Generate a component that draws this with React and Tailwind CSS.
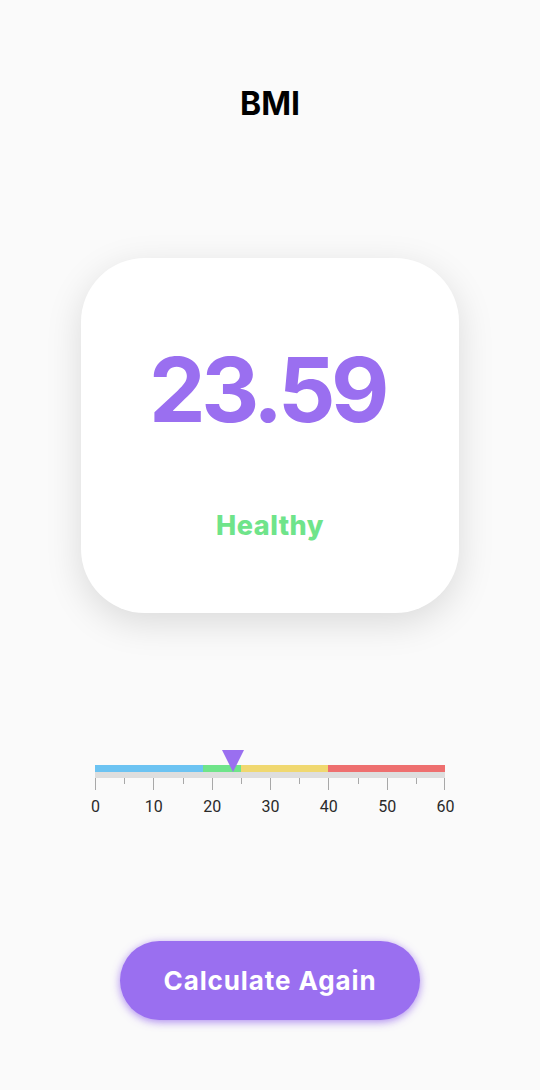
import React from "react";

const SEGMENTS = [
  { from: 0, to: 18.5, color: "bg-[#6cc3f2]" },
  { from: 18.5, to: 25, color: "bg-[#6fe48a]" },
  { from: 25, to: 40, color: "bg-[#f0d870]" },
  { from: 40, to: 60, color: "bg-[#ee6f6f]" },
];

function Scale({ value }) {
  const W = 350;
  const px = (v) => (v / 60) * W;
  const ticks = [];
  for (let i = 0; i <= 12; i++) ticks.push(i * 5);
  return (
    <div className="relative w-[350px] pt-[15px]">
      <div
        className="absolute top-0 w-0 h-0 border-l-[11px] border-r-[11px] border-t-[22px] border-l-transparent border-r-transparent border-t-[#9a6ff0]"
        style={{ left: px(value) - 11 }}
      />
      <div className="flex h-[7px] w-full">
        {SEGMENTS.map((s) => (
          <div key={s.from} className={s.color} style={{ width: px(s.to - s.from) }} />
        ))}
      </div>
      <div className="h-[6px] w-full bg-[#dedede]" />
      <div className="relative h-[12px] w-full">
        {ticks.map((t) => (
          <div
            key={t}
            className={`absolute top-0 w-px bg-[#a8a8a8] ${t % 10 === 0 ? "h-[12px]" : "h-[6px]"}`}
            style={{ left: px(t) - (t === 60 ? 1 : 0) }}
          />
        ))}
      </div>
      <div className="relative h-[24px] mt-[7px] w-full font-['Roboto',sans-serif] text-[16px] leading-[19px] text-[#2a2a2a]">
        {[0, 10, 20, 30, 40, 50, 60].map((t) => (
          <span
            key={t}
            className="absolute top-0 -translate-x-1/2"
            style={{ left: px(t) + 0.5 }}
          >
            {t}
          </span>
        ))}
      </div>
    </div>
  );
}

export default function App() {
  return (
    <div className="min-h-[1090px] w-full bg-[#fafafa] flex flex-col items-center font-['Inter',sans-serif]">
      <h1 className="pt-[84px] text-[32px] leading-[40px] font-bold text-black">BMI</h1>

      <div className="mt-[134px] w-[378px] h-[355px] rounded-[64px] bg-white shadow-[0_10px_36px_rgba(0,0,0,0.13)] flex flex-col items-center pt-[87px]">
        <div className="pr-[6px] text-[90px] leading-[90px] font-bold tracking-[-4.5px] text-[#9a6ff0]">23.59</div>
        <div className="mt-[76px] text-[27px] leading-[30px] font-extrabold tracking-[0.5px] text-[#6fe48a]">Healthy</div>
      </div>

      <div className="mt-[137px]">
        <Scale value={23.59} />
      </div>

      <button className="mt-[120px] w-[300px] h-[79px] rounded-full bg-[#9a6ff0] text-white text-[26px] font-bold tracking-[0.9px] shadow-[0_2px_8px_rgba(140,90,235,0.7)]">
        Calculate Again
      </button>
    </div>
  );
}
